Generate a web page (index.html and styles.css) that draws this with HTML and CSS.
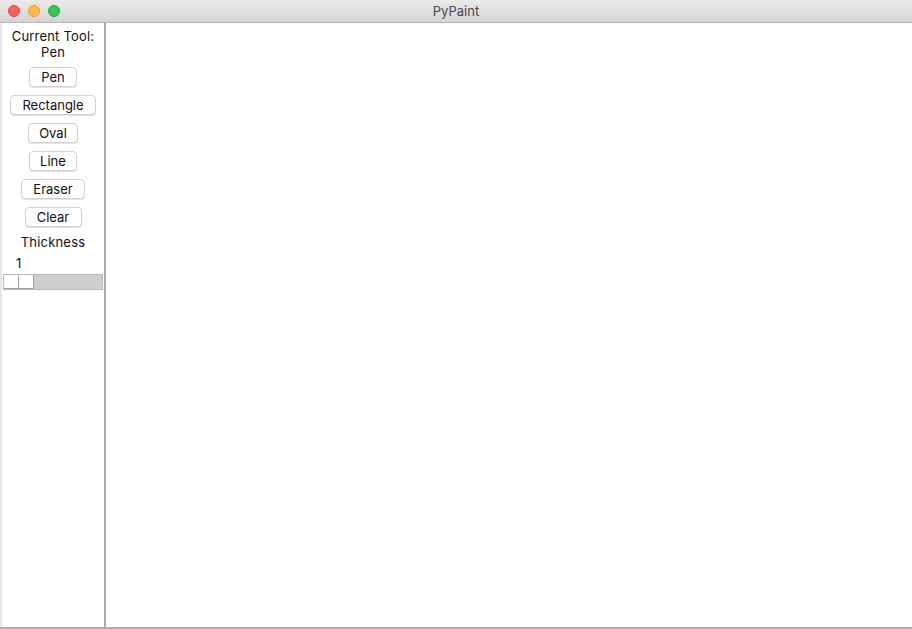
FILE: index.html
```html
<!DOCTYPE html>
<html>
<head>
<meta charset="utf-8">
<link rel="stylesheet" href="styles.css">
</head>
<body>
<div class="window">
  <div class="titlebar">
    <div class="lights">
      <span class="light red"></span>
      <span class="light yellow"></span>
      <span class="light green"></span>
    </div>
    <div class="title">PyPaint</div>
  </div>
  <div class="main">
    <div class="sidebar">
      <div class="label current">Current Tool:<br>Pen</div>
      <div class="buttons">
        <button class="btn w-pen">Pen</button>
        <button class="btn w-rect">Rectangle</button>
        <button class="btn w-oval">Oval</button>
        <button class="btn w-line">Line</button>
        <button class="btn w-eraser">Eraser</button>
        <button class="btn w-clear">Clear</button>
      </div>
      <div class="label thickness">Thickness</div>
      <div class="value">1</div>
      <div class="slider">
        <span class="thumb"></span><span class="thumb"></span>
      </div>
    </div>
    <div class="canvas"></div>
  </div>
</div>
</body>
</html>
```

FILE: styles.css
```css
html, body {
  margin: 0;
  padding: 0;
  background: #ffffff;
}
.window {
  width: 912px;
  height: 629px;
  display: flex;
  flex-direction: column;
  font-family: "Inter", "Liberation Sans", sans-serif;
  font-size: 13px;
  color: #111;
  overflow: hidden;
}
.titlebar {
  height: 23px;
  flex: none;
  box-sizing: border-box;
  border-bottom: 1px solid #b4b4b4;
  background: linear-gradient(#ebe9eb, #d5d3d5);
  display: flex;
  align-items: center;
  position: relative;
}
.lights {
  display: flex;
  gap: 8px;
  padding-left: 8px;
}
.light {
  width: 12px;
  height: 12px;
  border-radius: 50%;
  box-sizing: border-box;
}
.red { background: #fc605c; border: 1px solid #de4a46; }
.yellow { background: #fdbc40; border: 1px solid #dea235; }
.green { background: #34c84a; border: 1px solid #27aa36; }
.title {
  position: absolute;
  left: 0;
  right: 0;
  top: 0;
  line-height: 22px;
  text-align: center;
  color: #4a4a4a;
  font-size: 13px;
}
.main {
  flex: 1;
  display: flex;
  border-bottom: 2px solid #b0b0b0;
  box-sizing: border-box;
}
.sidebar {
  width: 106px;
  box-sizing: border-box;
  border-left: 2px solid #e6e6e6;
  border-right: 2px solid #a9a9a9;
  display: flex;
  flex-direction: column;
  align-items: center;
  padding-top: 5px;
}
.label {
  text-align: center;
  line-height: 16px;
  letter-spacing: 0.2px;
}
.buttons {
  display: flex;
  flex-direction: column;
  align-items: center;
  gap: 8px;
  margin-top: 7px;
}
.btn {
  height: 20px;
  box-sizing: border-box;
  border: 1px solid #d0d0d0;
  border-radius: 4px;
  background: #ffffff;
  font-family: inherit;
  font-size: 13px;
  color: #111;
  padding: 0;
  box-shadow: 0 1px 0 #e4e4e4;
  line-height: 18px;
}
.w-pen { width: 48px; }
.w-rect { width: 86px; }
.w-oval { width: 50px; }
.w-line { width: 48px; }
.w-eraser { width: 64px; }
.w-clear { width: 57px; }
.thickness {
  margin-top: 7px;
}
.value {
  align-self: flex-start;
  margin-left: 14px;
  margin-top: 5px;
  line-height: 16px;
}
.slider {
  align-self: stretch;
  margin: 3px 1px 0 1px;
  height: 16px;
  box-sizing: border-box;
  background: #cfcfcf;
  border: 1px solid #b8b8b8;
  display: flex;
}
.thumb {
  width: 15px;
  height: 14px;
  box-sizing: border-box;
  background: #ffffff;
  border-right: 1px solid #a0a0a0;
  border-bottom: 1px solid #a0a0a0;
}
.canvas {
  flex: 1;
  background: #ffffff;
}
```
